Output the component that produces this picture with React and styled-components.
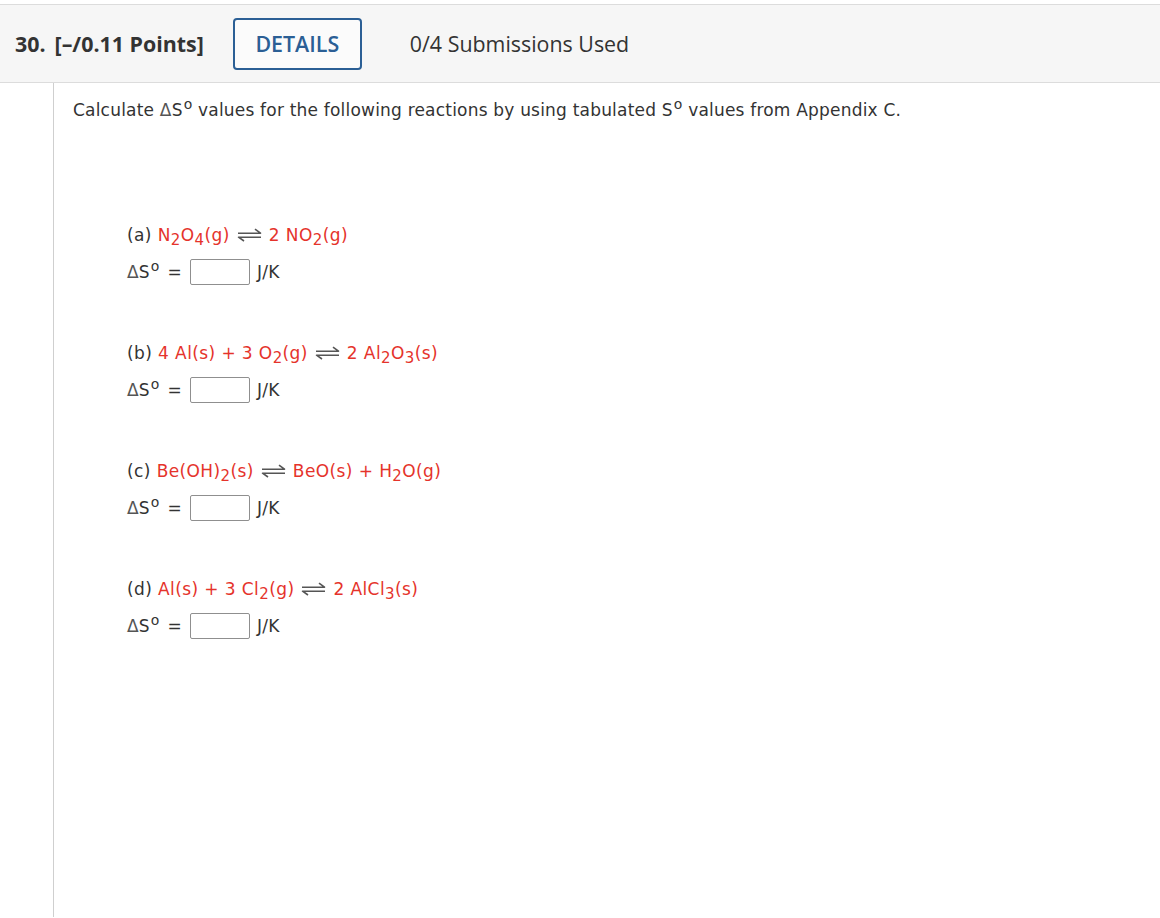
import React from "react";
import styled, { createGlobalStyle } from "styled-components";

const Global = createGlobalStyle`
  html, body { margin: 0; padding: 0; background: #fff; }
  body { font-family: "DejaVu Sans", Verdana, sans-serif; color: #333; }
`;

const Page = styled.div`
  width: 1160px;
  height: 918px;
  padding-top: 4px;
  box-sizing: border-box;
  display: flex;
  flex-direction: column;
  overflow: hidden;
`;

const Header = styled.div`
  height: 77px;
  background: #f6f6f6;
  border-top: 1px solid #dcdcdc;
  border-bottom: 1px solid #dcdcdc;
  display: flex;
  align-items: center;
  padding-left: 15px;
  font-family: "Open Sans", sans-serif;
  color: #333;
  font-size: 21.4px;
`;

const Num = styled.span`
  font-weight: 700;
  margin-right: 9px;
`;

const Points = styled.span`
  font-weight: 700;
  margin-right: 29px;
`;

const DetailsButton = styled.div`
  width: 129px;
  height: 52px;
  box-sizing: border-box;
  border: 2px solid #2b5f95;
  border-radius: 4px;
  color: #2b5f95;
  font-weight: 600;
  display: flex;
  align-items: center;
  justify-content: center;
  margin-right: 48px;
  background: #fbfbfb;
`;

const Submissions = styled.span`
  font-weight: 400;
`;

const Body = styled.div`
  flex: 1;
  display: flex;
`;

const Gutter = styled.div`
  width: 53px;
  border-right: 1px solid #cfcfcf;
  height: 834px;
`;

const Content = styled.div`
  padding: 15px 0 0 19px;
  font-family: "DejaVu Sans", Verdana, sans-serif;
  font-size: 17px;
  letter-spacing: 0.2px;
  color: #333;
`;

const Intro = styled.p`
  margin: 0 0 100px 0;
  line-height: 24px;
`;

const Part = styled.div`
  margin-left: 54px;
  margin-bottom: 56px;
`;

const Reaction = styled.div`
  height: 24px;
  line-height: 24px;
  display: flex;
  align-items: center;
  white-space: pre;
  letter-spacing: 0.4px;
`;

const Red = styled.span`
  color: #e5332b;
`;

const Sub = styled.sub`
  font-size: 15px;
  vertical-align: -4px;
  line-height: 0;
`;

const Sup = styled.span`
  font-size: 14px;
  position: relative;
  top: -7px;
  margin-left: 1px;
`;

const Delta = styled.span`
  color: #555;
`;

const AnswerRow = styled.div`
  display: flex;
  align-items: center;
  margin-top: 12px;
  height: 26px;
`;

const Eq = styled.span`
  margin: 0 8px 0 8px;
`;

const Input = styled.input`
  width: 60px;
  height: 26px;
  box-sizing: border-box;
  border: 1px solid #8f8f8f;
  border-radius: 2px;
  margin: 0 7px 0 0;
  padding: 0;
  background: #fff;
`;

const ArrowWrap = styled.span`
  display: inline-flex;
  align-items: center;
  margin: 0 7px 0 7px;
`;

const EqArrow = () => (
  <ArrowWrap>
    <svg width="25" height="14" viewBox="0 0 25 14">
      <path d="M1 5.2 H23.5 L18 1.2" fill="none" stroke="#555" strokeWidth="1.6" strokeLinejoin="round" />
      <path d="M24 9.2 H1.5 L7 13" fill="none" stroke="#555" strokeWidth="1.6" strokeLinejoin="round" />
    </svg>
  </ArrowWrap>
);

const DS = () => (
  <>
    <Delta>Δ</Delta>S<Sup>o</Sup>
  </>
);

const parts = [
  {
    label: "(a)",
    left: <>N<Sub>2</Sub>O<Sub>4</Sub>(g)</>,
    right: <>2 NO<Sub>2</Sub>(g)</>,
  },
  {
    label: "(b)",
    left: <>4 Al(s) + 3 O<Sub>2</Sub>(g)</>,
    right: <>2 Al<Sub>2</Sub>O<Sub>3</Sub>(s)</>,
  },
  {
    label: "(c)",
    left: <>Be(OH)<Sub>2</Sub>(s)</>,
    right: <>BeO(s) + H<Sub>2</Sub>O(g)</>,
  },
  {
    label: "(d)",
    left: <>Al(s) + 3 Cl<Sub>2</Sub>(g)</>,
    right: <>2 AlCl<Sub>3</Sub>(s)</>,
  },
];

export default function App() {
  return (
    <>
      <Global />
      <Page>
        <Header>
          <Num>30.</Num>
          <Points>[–/0.11 Points]</Points>
          <DetailsButton>DETAILS</DetailsButton>
          <Submissions>0/4 Submissions Used</Submissions>
        </Header>
        <Body>
          <Gutter />
          <Content>
            <Intro>
              Calculate <DS /> values for the following reactions by using tabulated S<Sup>o</Sup> values from Appendix C.
            </Intro>
            {parts.map((p) => (
              <Part key={p.label}>
                <Reaction>
                  <span>{p.label} </span>
                  <Red>{p.left}</Red>
                  <EqArrow />
                  <Red>{p.right}</Red>
                </Reaction>
                <AnswerRow>
                  <span><DS /></span>
                  <Eq>=</Eq>
                  <Input type="text" />
                  <span>J/K</span>
                </AnswerRow>
              </Part>
            ))}
          </Content>
        </Body>
      </Page>
    </>
  );
}
